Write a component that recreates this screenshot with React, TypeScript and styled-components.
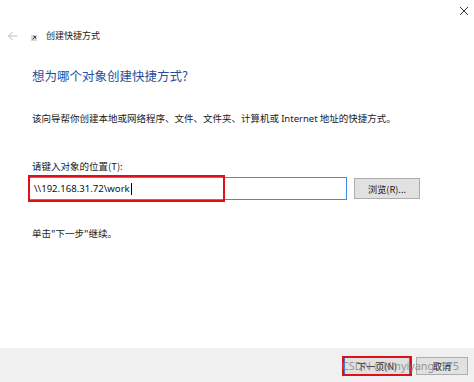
import React from "react";
import styled, { createGlobalStyle } from "styled-components";

const Global = createGlobalStyle`
  html, body { margin: 0; padding: 0; background: #ffffff; }
  body { font-family: "Noto Sans CJK SC", "Noto Sans", sans-serif; }
`;

const Window = styled.div`
  position: relative;
  width: 474px;
  height: 382px;
  display: flex;
  flex-direction: column;
  background: #ffffff;
  overflow: hidden;
`;

const TopBar = styled.div`
  height: 22px;
  display: flex;
  justify-content: flex-end;
  align-items: center;
  padding-right: 5px;
`;

const CloseBtn = styled.div`
  width: 10px;
  height: 10px;
  display: flex;
  align-items: center;
  justify-content: center;
`;

const NavRow = styled.div`
  height: 28px;
  display: flex;
  align-items: center;
  padding-left: 7px;
`;

const BackArrow = styled.div`
  width: 11px;
  height: 10px;
  display: flex;
  align-items: center;
`;

const ShortcutIcon = styled.div`
  margin-left: 13px;
  margin-top: 4px;
  width: 6px;
  height: 6px;
  display: flex;
`;

const WindowTitle = styled.span`
  margin-left: 9px;
  font-size: 9px;
  line-height: 12px;
  color: #222;
`;

const Body = styled.div`
  flex: 1;
  display: flex;
  flex-direction: column;
  padding-left: 32px;
`;

const Heading = styled.div`
  margin-top: 17px;
  font-size: 12.5px;
  line-height: 18px;
  color: #1f4f9e;
`;

const Text = styled.div<{ $top: number }>`
  margin-top: ${(p) => p.$top}px;
  font-size: 9.5px;
  line-height: 14px;
  color: #1a1a1a;
  white-space: nowrap;
`;

const Latin = styled.span`
  font-family: "Noto Sans", sans-serif;
`;

const InputRow = styled.div`
  margin-top: 4px;
  margin-left: -3px;
  display: flex;
  align-items: center;
  gap: 7px;
  height: 23px;
`;

const InputBox = styled.div`
  position: relative;
  width: 312px;
  height: 21px;
  border: 1px solid #3d8ee0;
  display: flex;
  align-items: center;
  padding-left: 4px;
  box-sizing: content-box;
  font-family: "Noto Sans", sans-serif;
  font-size: 9.6px;
  color: #111;
`;

const Caret = styled.span`
  display: inline-block;
  width: 1px;
  height: 12px;
  background: #000;
  margin-left: 1px;
`;

const RedMark = styled.div`
  position: absolute;
  left: -2px;
  top: -3px;
  width: 193px;
  height: 23px;
  border: 2px solid #e0101a;
  pointer-events: none;
`;

const Button = styled.div<{ $w: number; $primary?: boolean }>`
  position: relative;
  width: ${(p) => p.$w}px;
  height: 18px;
  box-sizing: border-box;
  background: #e1e1e1;
  border: 1px solid ${(p) => (p.$primary ? "#2f7fd6" : "#adadad")};
  display: flex;
  align-items: center;
  justify-content: center;
  font-size: 9.2px;
  color: #1a1a1a;
`;

const BrowseButton = styled(Button)`
  height: 21px;
`;

const Footer = styled.div`
  height: 34px;
  background: #f0f0f0;
  display: flex;
  justify-content: flex-end;
  align-items: flex-start;
  padding: 9px 6px 0 0;
  box-sizing: border-box;
  gap: 6px;
`;

const ButtonMark = styled.div`
  position: absolute;
  left: -3px;
  top: -2px;
  right: -3px;
  bottom: -2px;
  border: 2px solid #e0101a;
  pointer-events: none;
`;

const Watermark = styled.div`
  position: absolute;
  left: 342px;
  top: 359px;
  font-family: "Noto Sans", sans-serif;
  font-size: 10.8px;
  line-height: 14px;
  color: rgba(120, 120, 120, 0.75);
  white-space: nowrap;
  pointer-events: none;
`;

export default function App() {
  return (
    <Window>
      <Global />
      <TopBar>
        <CloseBtn>
          <svg width="10" height="10" viewBox="0 0 10 10">
            <path d="M1 1 L9 9 M9 1 L1 9" stroke="#333" strokeWidth="1" />
          </svg>
        </CloseBtn>
      </TopBar>
      <NavRow>
        <BackArrow>
          <svg width="11" height="10" viewBox="0 0 11 10">
            <path d="M10.5 5 H1.5 M5.5 1 L1.5 5 L5.5 9" stroke="#bdbdbd" strokeWidth="1" fill="none" />
          </svg>
        </BackArrow>
        <ShortcutIcon>
          <svg width="6" height="6" viewBox="0 0 6 6">
            <rect x="0" y="0" width="6" height="6" fill="#d8d8d8" />
            <path d="M1.5 4.5 L4.5 1.5 M2.5 1.5 H4.5 V3.5" stroke="#333" strokeWidth="0.9" fill="none" />
          </svg>
        </ShortcutIcon>
        <WindowTitle>创建快捷方式</WindowTitle>
      </NavRow>
      <Body>
        <Heading>想为哪个对象创建快捷方式?</Heading>
        <Text $top={26}>
          该向导帮你创建本地或网络程序、文件、文件夹、计算机或 <Latin>Internet</Latin> 地址的快捷方式。
        </Text>
        <Text $top={33}>请键入对象的位置(T):</Text>
        <InputRow>
          <InputBox>
            \\192.168.31.72\work<Caret />
            <RedMark />
          </InputBox>
          <BrowseButton $w={66}>浏览(R)...</BrowseButton>
        </InputRow>
        <Text $top={26}>单击"下一步"继续。</Text>
      </Body>
      <Footer>
        <Button $w={66} $primary>
          下一页(N)
          <ButtonMark />
        </Button>
        <Button $w={52}>取消</Button>
      </Footer>
      <Watermark>CSDN @Ninyiyang5175</Watermark>
    </Window>
  );
}
